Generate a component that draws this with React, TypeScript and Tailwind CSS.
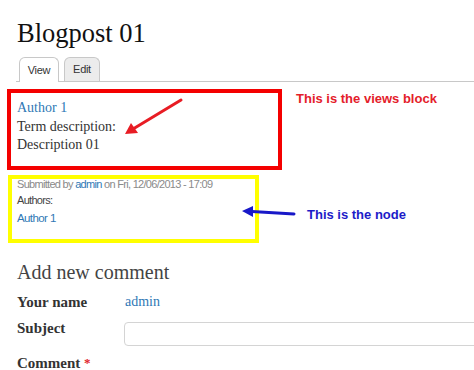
import React from "react";

const serif = { fontFamily: '"Liberation Serif", "DejaVu Serif", serif' };
const sans = { fontFamily: '"Liberation Sans", Arial, sans-serif' };

export default function App() {
  return (
    <div className="relative w-[474px] h-[370px] overflow-hidden bg-white text-[#333]">
      <h1 className="pt-[18px] pl-[17px] text-[26.5px] leading-[30px] text-[#111] font-normal" style={serif}>
        Blogpost 01
      </h1>

      <div className="mt-[9px] ml-[16px] flex items-end border-b border-[#c8c8c8] h-[25px]" style={sans}>
        <div className="ml-[3px] w-[40px] h-[25px] -mb-px border border-b-0 border-[#c8c8c8] rounded-t-[6px] bg-white flex items-center justify-center text-[11px] text-[#333] tracking-[-0.3px]">
          View
        </div>
        <div className="ml-[5px] w-[36px] h-[24px] border border-b-0 border-[#c8c8c8] rounded-t-[6px] bg-[#ececec] flex items-center justify-center text-[11px] text-[#333] tracking-[-0.3px]">
          Edit
        </div>
      </div>

      <div className="mt-[7px] ml-[7px] w-[275px] h-[81px] border-4 border-[#f40000] pl-[6px] pt-[6px] text-[14px] leading-[18.5px] text-[#333]" style={serif}>
        <div className="text-[#2f78b5]">Author 1</div>
        <div>Term description:</div>
        <div>Description 01</div>
      </div>

      <div className="mt-[5px] ml-[8px] w-[251px] h-[68px] border-4 border-[#ffff00] pl-[5px]" style={sans}>
        <div className="text-[11px] leading-[11px] text-[#8a8a8a] tracking-[-0.7px] whitespace-nowrap">
          Submitted by <span className="text-[#2f78b5]">admin</span> on Fri, 12/06/2013 - 17:09
        </div>
        <div className="mt-[4px] text-[11px] leading-[13px] text-[#444] tracking-[-0.7px]">Authors:</div>
        <div className="mt-[5px] text-[11.5px] leading-[13px] text-[#2f78b5] tracking-[-0.6px]">Author 1</div>
      </div>

      <h2 className="mt-[17px] pl-[17px] text-[20px] leading-[24px] text-[#444] font-normal" style={serif}>
        Add new comment
      </h2>

      <div className="mt-[9px] pl-[17px] flex text-[15px] leading-[18px]" style={serif}>
        <div className="w-[108px] shrink-0 font-bold text-[#333]">Your name</div>
        <div className="text-[#2f78b5] text-[14px]">admin</div>
      </div>

      <div className="mt-[8px] pl-[17px] flex items-start text-[15px] leading-[18px]" style={serif}>
        <div className="w-[107px] shrink-0 font-bold text-[#333]">Subject</div>
        <div className="mt-[3px] w-[380px] h-[24px] shrink-0 border border-[#d4d4d4] rounded-[4px] bg-white" />
      </div>

      <div className="mt-[8px] pl-[17px] flex text-[15px] leading-[18px]" style={serif}>
        <div className="font-bold text-[#333]">
          Comment <span className="text-[#e0202a] text-[13px] align-top">*</span>
        </div>
      </div>

      <div className="absolute left-[296px] top-[89px] text-[13px] font-bold text-[#e4202a] whitespace-nowrap" style={sans}>
        This is the views block
      </div>
      <div className="absolute left-[307px] top-[205px] text-[13px] font-bold text-[#1c1cc8] whitespace-nowrap" style={sans}>
        This is the node
      </div>

      <svg className="absolute left-0 top-0 pointer-events-none" width="474" height="370" viewBox="0 0 474 370">
        <line x1="181" y1="100" x2="133" y2="129" stroke="#e81c24" strokeWidth="3" strokeLinecap="round" />
        <polygon points="125,134 131,123 138,133" fill="#e81c24" />
        <line x1="294" y1="214" x2="252" y2="211.5" stroke="#1818c8" strokeWidth="3" strokeLinecap="round" />
        <polygon points="242,211 253,206 253,217" fill="#1818c8" />
      </svg>
    </div>
  );
}
